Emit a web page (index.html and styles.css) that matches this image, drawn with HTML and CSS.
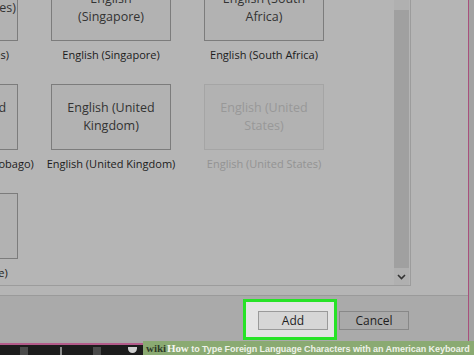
FILE: index.html
```html
<!DOCTYPE html>
<html lang="en">
<head>
    <meta charset="UTF-8">
    <title>Add a keyboard language</title>
    <link rel="stylesheet" href="styles.css">
</head>
<body>
    <div class="window">
        <div class="dialog">
            <!-- Language list -->
            <div class="list">
                <div class="grid-area">
                    <div class="grid">
                        <div class="cell">
                            <div class="tile">English (Philippines)</div>
                            <div class="label">English (Philippines)</div>
                        </div>
                        <div class="cell">
                            <div class="tile">English<br>(Singapore)</div>
                            <div class="label">English (Singapore)</div>
                        </div>
                        <div class="cell">
                            <div class="tile">English (South<br>Africa)</div>
                            <div class="label">English (South Africa)</div>
                        </div>
                        <div class="cell">
                            <div class="tile">English (Trinidad<br>and Tobago)</div>
                            <div class="label">English (Trinidad and Tobago)</div>
                        </div>
                        <div class="cell">
                            <div class="tile">English (United<br>Kingdom)</div>
                            <div class="label">English (United Kingdom)</div>
                        </div>
                        <div class="cell disabled">
                            <div class="tile">English (United<br>States)</div>
                            <div class="label">English (United States)</div>
                        </div>
                        <div class="cell">
                            <div class="tile">English<br>(Zimbabwe)</div>
                            <div class="label">English (Zimbabwe)</div>
                        </div>
                    </div>
                </div>
                <div class="scrollbar">
                    <div class="thumb"></div>
                    <div class="arrow">
                        <svg width="9" height="6" viewBox="0 0 9 6">
                            <path d="M1 1 L4.5 4.5 L8 1" fill="none" stroke="#333" stroke-width="1.6"/>
                        </svg>
                    </div>
                </div>
            </div>

            <!-- Buttons -->
            <div class="footer">
                <span class="highlight">
                    <button class="btn btn-add">Add</button>
                </span>
                <button class="btn btn-cancel">Cancel</button>
            </div>
        </div>
        <div class="side"></div>
    </div>

    <!-- Taskbar and caption -->
    <div class="bottom">
        <div class="taskbar">
            <span class="task t1"></span>
            <span class="task t2"></span>
            <span class="task t3"></span>
            <span class="task t4"></span>
        </div>
        <div class="caption"><span class="wiki">wiki</span><span class="how">How</span> to Type Foreign Language Characters with an American Keyboard</div>
    </div>
</body>
</html>
```

FILE: styles.css
```css
body {
    margin: 0;
    width: 474px;
    height: 355px;
    overflow: hidden;
    background: #9e9e9e;
    font-family: 'Open Sans', 'Noto Sans', sans-serif;
    color: #2e2e2e;
}

/* Window */
.window {
    display: flex;
    height: 341px;
}

.dialog {
    width: 468px;
    border-right: 1px solid #a8507c;
    background: #b5b5b5;
    display: flex;
    flex-direction: column;
}

.side {
    flex: 1;
    background: #a3a3a3;
}

/* Language list */
.list {
    display: flex;
    width: 410px;
    height: 285px;
    border-right: 1px solid #9c9c9c;
    border-bottom: 1px solid #9c9c9c;
    overflow: hidden;
}

.grid-area {
    flex: 1;
    overflow: hidden;
}

.grid {
    display: grid;
    grid-template-columns: repeat(3, 120px);
    column-gap: 33px;
    margin-top: -25px;
    margin-left: -102px;
}

.cell {
    height: 109px;
}

.tile {
    box-sizing: border-box;
    height: 66px;
    border: 1px solid #7c7c7c;
    background: #b2b2b2;
    display: flex;
    align-items: center;
    justify-content: center;
    text-align: center;
    font-size: 12.5px;
    line-height: 18px;
    color: #333;
}

.label {
    padding-top: 6px;
    font-size: 11px;
    line-height: 16px;
    text-align: center;
    white-space: nowrap;
    margin: 0 -20px;
    color: #1c1c1c;
}

.disabled .tile {
    border-color: #a5a5a5;
    color: #989898;
}

.disabled .label {
    color: #939393;
}

/* Scrollbar */
.scrollbar {
    width: 15px;
    margin-right: 1px;
    background: #b0b0b0;
    display: flex;
    flex-direction: column;
}

.thumb {
    margin-top: 10px;
    height: 258px;
    background: #a0a0a0;
}

.arrow {
    flex: 1;
    display: flex;
    justify-content: center;
    padding-top: 6px;
}

/* Footer */
.footer {
    flex: 1;
    margin-top: 9px;
    border-top: 1px solid #9a9a9a;
    background: #aaaaaa;
    display: flex;
    align-items: flex-start;
    justify-content: flex-end;
    padding: 3px 59px 0 0;
}

.highlight {
    display: block;
    border: 3px solid #27e327;
    background: #e4e4e4;
    padding: 9px 6px 7px 12px;
}

.btn {
    box-sizing: border-box;
    width: 70px;
    height: 19px;
    padding: 0;
    font-family: 'Open Sans', 'Noto Sans', sans-serif;
    font-size: 12px;
    line-height: 17px;
    color: #1e1e1e;
}

.btn-add {
    display: block;
    background: #d6d6d6;
    border: 1px solid #9a9a9a;
}

.btn-cancel {
    margin: 12px 0 0 2px;
    background: #a9a9a9;
    border: 1px solid #888;
}

/* Bottom strip */
.bottom {
    display: flex;
    height: 14px;
}

.taskbar {
    width: 143px;
    background: #1c1c1c;
    border-top: 2px solid #a8a8a8;
    box-shadow: inset 0 2px 0 #b35b8a;
    position: relative;
    overflow: hidden;
}

.task {
    position: absolute;
    top: 4px;
    width: 8px;
    height: 10px;
    background: #4a4a4a;
}

.t1 { left: 20px; }
.t2 { left: 93px; }
.t3 { left: 60px; width: 2px; background: #8a8a8a; }
.t4 { left: 128px; width: 9px; height: 6px; border-radius: 0 0 5px 5px; background: #cfcfcf; }

.caption {
    flex: 1;
    background: #8aaa72;
    color: #eef2e8;
    font-family: 'Liberation Sans', Arial, sans-serif;
    font-weight: bold;
    font-size: 9px;
    letter-spacing: -0.06px;
    line-height: 14px;
    white-space: nowrap;
    overflow: hidden;
    padding-left: 3px;
}

.wiki {
    font-family: 'Liberation Serif', serif;
    color: #2f3b28;
    font-size: 11px;
    margin-right: 1px;
}

.how {
    font-family: 'Liberation Serif', serif;
    color: #f4f6f0;
    font-size: 11px;
}
```
